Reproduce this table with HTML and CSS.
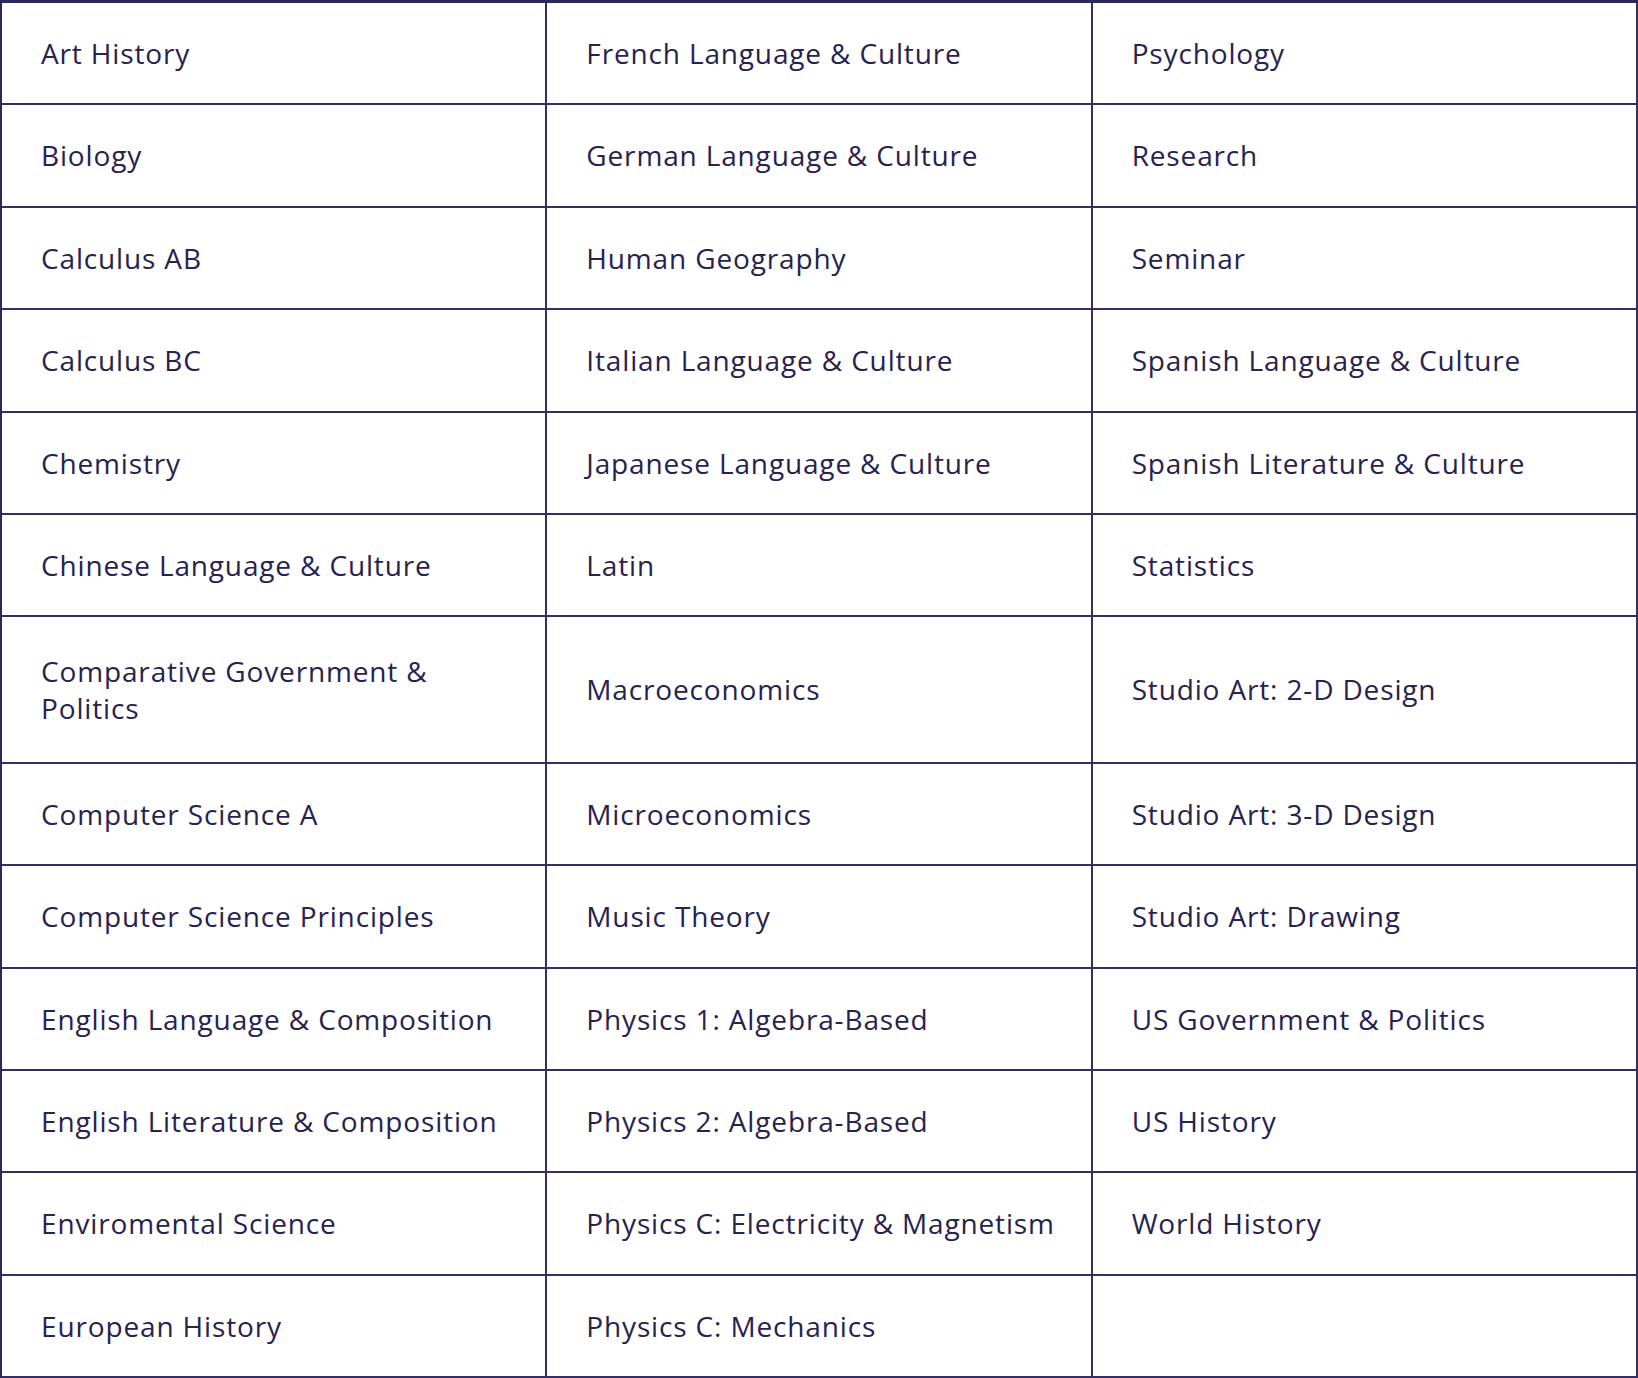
FILE: index.html
```html
<!DOCTYPE html>
<html lang="en">
<head>
<meta charset="utf-8">
<title>Courses</title>
<link rel="stylesheet" href="styles.css">
</head>
<body>
<div class="course-grid">
  <div class="cell">Art History</div>
  <div class="cell">French Language &amp; Culture</div>
  <div class="cell">Psychology</div>
  <div class="cell">Biology</div>
  <div class="cell">German Language &amp; Culture</div>
  <div class="cell">Research</div>
  <div class="cell">Calculus AB</div>
  <div class="cell">Human Geography</div>
  <div class="cell">Seminar</div>
  <div class="cell">Calculus BC</div>
  <div class="cell">Italian Language &amp; Culture</div>
  <div class="cell">Spanish Language &amp; Culture</div>
  <div class="cell">Chemistry</div>
  <div class="cell">Japanese Language &amp; Culture</div>
  <div class="cell">Spanish Literature &amp; Culture</div>
  <div class="cell">Chinese Language &amp; Culture</div>
  <div class="cell">Latin</div>
  <div class="cell">Statistics</div>
  <div class="cell"><span class="wrap">Comparative Government &amp; Politics</span></div>
  <div class="cell">Macroeconomics</div>
  <div class="cell">Studio Art: 2-D Design</div>
  <div class="cell">Computer Science A</div>
  <div class="cell">Microeconomics</div>
  <div class="cell">Studio Art: 3-D Design</div>
  <div class="cell">Computer Science Principles</div>
  <div class="cell">Music Theory</div>
  <div class="cell">Studio Art: Drawing</div>
  <div class="cell">English Language &amp; Composition</div>
  <div class="cell">Physics 1: Algebra-Based</div>
  <div class="cell">US Government &amp; Politics</div>
  <div class="cell">English Literature &amp; Composition</div>
  <div class="cell">Physics 2: Algebra-Based</div>
  <div class="cell">US History</div>
  <div class="cell">Enviromental Science</div>
  <div class="cell">Physics C: Electricity &amp; Magnetism</div>
  <div class="cell">World History</div>
  <div class="cell">European History</div>
  <div class="cell">Physics C: Mechanics</div>
  <div class="cell"></div>
</div>
</body>
</html>
```

FILE: styles.css
```css
html, body {
  margin: 0;
  padding: 0;
  background: #ffffff;
}

.course-grid {
  box-sizing: border-box;
  width: 1638px;
  height: 1378px;
  display: grid;
  grid-template-columns: repeat(3, 1fr);
  grid-template-rows: repeat(6, 102.4px) 146.4px repeat(6, 102.4px);
  border-top: 3px solid #2c2859;
  border-left: 2px solid #2c2859;
  font-family: "Open Sans", "Liberation Sans", sans-serif;
  font-size: 28px;
  line-height: 37.3px;
  letter-spacing: 0.85px;
  color: #27224f;
}

.cell {
  box-sizing: border-box;
  display: flex;
  align-items: center;
  padding: 1px 16px 0 39px;
  border-right: 2px solid #332f60;
  border-bottom: 2px solid #332f60;
}

.wrap {
  max-width: 440px;
}
```
